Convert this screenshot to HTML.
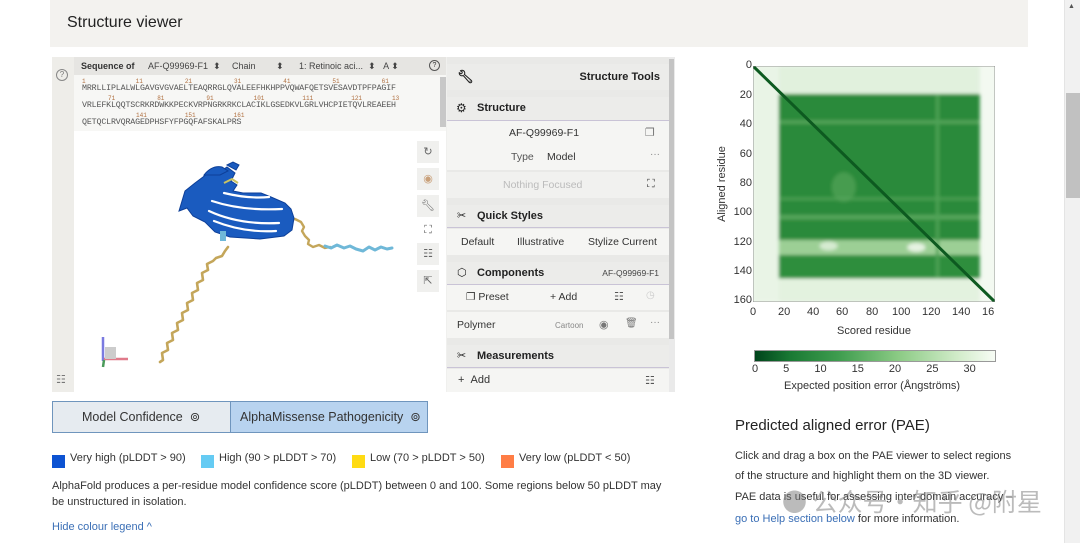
<!DOCTYPE html>
<html><head><meta charset="utf-8">
<style>
*{box-sizing:border-box;margin:0;padding:0}
body{width:1080px;height:543px;overflow:hidden;background:#fff;font-family:"Liberation Sans","DejaVu Sans",sans-serif;color:#333;position:relative}
.a{position:absolute}
.t{position:absolute;white-space:nowrap}
.row{position:absolute;left:447px;width:222px;background:#f5f5f3}
.hd{background:#ececea;font-weight:bold;font-size:11px;color:#222;border-bottom:1px solid #c9c3d6}
.mono{font-family:"Liberation Mono",monospace;font-size:8.3px;color:#555;letter-spacing:-0.15px}
.num{font-family:"Liberation Mono",monospace;font-size:6px;color:#b07040}
.ic{position:absolute;width:22px;height:22px;background:#f0f0ee;color:#666;font-size:11px;text-align:center;line-height:22px}
.yl{position:absolute;left:718px;width:34px;text-align:right;font-size:11px}
</style></head><body>
<div class="a" style="left:50px;top:0;width:978px;height:47px;background:#f3f2ef"></div>
<div class="t" style="left:67px;top:14px;font-size:16px;color:#222">Structure viewer</div>
<div class="a" style="left:1064px;top:0;width:16px;height:543px;background:#f1f1f1;border-left:1px solid #e4e4e4"></div>
<div class="a" style="left:1066px;top:93px;width:14px;height:105px;background:#c1c1c1"></div>
<div class="t" style="left:1068px;top:3px;font-size:7px;color:#555">▲</div>

<div class="a" style="left:52px;top:57px;width:623px;height:335px;background:#f0f0ee"></div>
<div class="a" style="left:52px;top:57px;width:22px;height:335px;background:#eeede9"></div>
<div class="t" style="left:56px;top:69px;width:12px;height:12px;border:1px solid #888;border-radius:50%;font-size:8px;text-align:center;line-height:10px;color:#777">?</div>
<div class="t" style="left:56px;top:373px;font-size:11px;color:#777">☷</div>
<div class="a" style="left:74px;top:57px;width:372px;height:18px;background:#e6e5e2"></div>
<div class="t" style="left:81px;top:61px;font-size:9px;font-weight:bold;color:#333">Sequence of</div>
<div class="t" style="left:148px;top:61px;font-size:9px;color:#444">AF-Q99969-F1 &nbsp;⬍</div>
<div class="t" style="left:232px;top:61px;font-size:9px;color:#444">Chain</div>
<div class="t" style="left:276px;top:61px;font-size:9px;color:#444">⬍</div>
<div class="t" style="left:299px;top:61px;font-size:9px;color:#444">1: Retinoic aci... &nbsp;⬍ &nbsp;&nbsp;A ⬍</div>
<div class="t" style="left:429px;top:60px;width:11px;height:11px;border:1px solid #555;border-radius:50%;font-size:7px;text-align:center;line-height:9px">?</div>
<div class="a" style="left:74px;top:75px;width:372px;height:56px;background:#f7f7f5"></div>
<div class="a" style="left:440px;top:77px;width:6px;height:50px;background:#c8c8c8"></div>
<div class="t num" style="left:82px;top:78px">1<span style="padding-left:50px">11</span><span style="padding-left:42px">21</span><span style="padding-left:42px">31</span><span style="padding-left:42px">41</span><span style="padding-left:42px">51</span><span style="padding-left:42px">61</span></div>
<div class="t mono" style="left:82px;top:84px">MRRLLIPLALWLGAVGVGVAELTEAQRRGLQVALEEFHKHPPVQWAFQETSVESAVDTPFPAGIF</div>
<div class="t num" style="left:108px;top:95px">71<span style="padding-left:42px">81</span><span style="padding-left:42px">91</span><span style="padding-left:40px">101</span><span style="padding-left:38px">111</span><span style="padding-left:38px">121</span><span style="padding-left:30px">13</span></div>
<div class="t mono" style="left:82px;top:101px">VRLEFKLQQTSCRKRDWKKPECKVRPNGRKRKCLACIKLGSEDKVLGRLVHCPIETQVLREAEEH</div>
<div class="t num" style="left:136px;top:112px">141<span style="padding-left:38px">151</span><span style="padding-left:38px">161</span></div>
<div class="t mono" style="left:82px;top:118px">QETQCLRVQRAGEDPHSFYFPGQFAFSKALPRS</div>
<div class="a" style="left:74px;top:131px;width:372px;height:261px;background:#fff"></div>
<div class="ic" style="left:417px;top:141px">↻</div>
<div class="ic" style="left:417px;top:168px;color:#c9a07a">◉</div>
<div class="ic" style="left:417px;top:195px">🔧︎</div>
<div class="ic" style="left:417px;top:219px;background:#fff">⛶</div>
<div class="ic" style="left:417px;top:243px">☷</div>
<div class="ic" style="left:417px;top:270px">⇱</div>
<svg class="a" style="left:74px;top:131px" width="372" height="261">
 <g fill="none" stroke-linecap="round" stroke-linejoin="round">
  <path d="M86 231 l3-2 l-1-7 l6-3 l-1-7 l6-3 l-1-7 l6-3 l-1-7 l6-3 l-1-7 l6-3 l-1-7 l6-3 l-1-7 l6-3 l-1-7 l6-3 l-1-7 l6-3 l-1-6 l6-3 l3-3 l6-2 l3-5 l3-4" stroke="#c4a65a" stroke-width="2.6"/>
  <path d="M205 86 l8 3 l8 -1 l6 3 l3 5 l-2 4 l3 5 l4 4 l-1 4 l5 3 l6-2 l6 3 l5-1" stroke="#c4a65a" stroke-width="2.4"/>
  <path d="M251 115 l6 2 l6-3 l7 3 l6-2 l6 3 l7 2 l6-4 l6 3 l6-3 l6 2 l5-1" stroke="#6fb8d8" stroke-width="3"/>
 </g>
 <g fill="#1a5bbf" stroke="#0d3f98" stroke-width="1">
  <path d="M111 60 l10 -8 l8 -6 l10 -8 l8 2 l6 -4 l8 6 l-4 8 l6 4 l-4 6 l10 2 l18 0 l10 4 l14 6 l6 6 l3 9 l-2 12 l-8 6 l-24 3 l-30 -2 l-15 -5 l-10 -10 l-12 -6 l-6 -8 l-8 3 z"/>
  <path d="M130 44 q8-10 18-8 l6 4 l-8 4 z"/>
  <path d="M153 34 l6 -3 l6 3 l-3 5 z"/>
 </g>
 <g fill="none" stroke="#fff" stroke-width="2.2" stroke-linecap="round">
  <path d="M135 80 q30 14 70 12"/><path d="M140 90 q30 12 62 10"/><path d="M138 70 q30 10 70 8"/><path d="M150 62 q25 6 45 4"/>
 </g>
 <path d="M150 52 l8 -4 l6 4" stroke="#c9c262" stroke-width="2" fill="none"/>
 <rect x="146" y="100" width="6" height="10" fill="#6fb8d8"/>
 <g stroke-width="2.5">
  <line x1="29" y1="206" x2="29" y2="230" stroke="#7a7ae0"/>
  <line x1="30" y1="228" x2="54" y2="228" stroke="#e07a8a"/>
  <line x1="30" y1="229" x2="29" y2="236" stroke="#4a9a5a"/>
 </g>
 <rect x="31" y="216" width="11" height="12" fill="#ccc"/>
</svg>

<div class="a" style="left:447px;top:57px;width:222px;height:335px;background:#e9e9e7"></div>
<div class="a" style="left:669px;top:57px;width:6px;height:335px;background:#eaeaea"></div>
<div class="a" style="left:669px;top:59px;width:5px;height:280px;background:#c4c4c4"></div>
<div class="row hd" style="top:64px;height:26px;border:none"><span class="t" style="left:10px;top:5px;font-size:13px">🔧︎</span><span class="t" style="right:9px;top:7px">Structure Tools</span></div>
<div class="row hd" style="top:97px;height:24px"><span class="t" style="left:9px;top:4px;font-size:12px">⚙</span><span class="t" style="left:30px;top:5px">Structure</span></div>
<div class="row" style="top:121px;height:25px"><span class="t" style="left:62px;top:6px;font-size:10.5px">AF-Q99969-F1</span><span class="t" style="left:198px;top:5px;font-size:11px;color:#777">❐</span></div>
<div class="row" style="top:146px;height:24px"><span class="t" style="left:64px;top:5px;font-size:10.5px;color:#555">Type</span><span class="t" style="left:100px;top:5px;font-size:10.5px">Model</span><span class="t" style="left:203px;top:3px;font-size:10px;color:#888">···</span></div>
<div class="row" style="top:172px;height:26px;background:#f1f1ef"><span class="t" style="left:56px;top:7px;font-size:10.5px;color:#bbb">Nothing Focused</span><span class="t" style="left:200px;top:6px;font-size:11px;color:#444">⛶</span></div>
<div class="row hd" style="top:205px;height:23px"><span class="t" style="left:10px;top:4px;font-size:11px">✂</span><span class="t" style="left:30px;top:5px">Quick Styles</span></div>
<div class="row" style="top:229px;height:26px"><span class="t" style="left:14px;top:7px;font-size:10.5px">Default</span><span class="t" style="left:70px;top:7px;font-size:10.5px">Illustrative</span><span class="t" style="left:141px;top:7px;font-size:10.5px">Stylize Current</span></div>
<div class="row hd" style="top:262px;height:23px"><span class="t" style="left:10px;top:4px;font-size:11px">⬡</span><span class="t" style="left:30px;top:5px">Components</span><span class="t" style="right:10px;top:6px;font-size:8.5px;font-weight:normal;color:#444">AF-Q99969-F1</span></div>
<div class="row" style="top:285px;height:25px"><span class="t" style="left:19px;top:6px;font-size:10.5px">❐ Preset</span><span class="t" style="left:103px;top:6px;font-size:10.5px">+ Add</span><span class="t" style="left:167px;top:5px;font-size:11px;color:#555">☷</span><span class="t" style="left:199px;top:5px;font-size:10px;color:#ccc">◷</span></div>
<div class="row" style="top:312px;height:26px"><span class="t" style="left:10px;top:7px;font-size:10.5px">Polymer</span><span class="t" style="left:108px;top:9px;font-size:8px;color:#888">Cartoon</span><span class="t" style="left:152px;top:6px;font-size:11px;color:#777">◉</span><span class="t" style="left:178px;top:6px;font-size:10px;color:#777">🗑︎</span><span class="t" style="left:203px;top:5px;font-size:10px;color:#888">···</span></div>
<div class="row hd" style="top:345px;height:23px"><span class="t" style="left:10px;top:4px;font-size:11px">✂</span><span class="t" style="left:30px;top:5px">Measurements</span></div>
<div class="row" style="top:369px;height:23px"><span class="t" style="left:11px;top:5px;font-size:11px">+ &nbsp;Add</span><span class="t" style="left:198px;top:5px;font-size:11px;color:#555">☷</span></div>

<div class="a" style="left:52px;top:401px;width:376px;height:32px;border:1px solid #6f95bd;background:#e6ebf0"></div>
<div class="a" style="left:230px;top:401px;width:198px;height:32px;border:1px solid #6f95bd;background:#b8d3ef"></div>
<div class="t" style="left:82px;top:409px;font-size:12.5px;color:#333">Model Confidence &nbsp;⊚</div>
<div class="t" style="left:240px;top:409px;font-size:12.5px;color:#333">AlphaMissense Pathogenicity &nbsp;⊚</div>
<div class="a" style="left:52px;top:455px;width:13px;height:13px;background:#0d53d2"></div>
<div class="t" style="left:70px;top:452px;font-size:11px">Very high (pLDDT &gt; 90)</div>
<div class="a" style="left:201px;top:455px;width:13px;height:13px;background:#65cbf3"></div>
<div class="t" style="left:219px;top:452px;font-size:11px">High (90 &gt; pLDDT &gt; 70)</div>
<div class="a" style="left:352px;top:455px;width:13px;height:13px;background:#ffdb13"></div>
<div class="t" style="left:370px;top:452px;font-size:11px">Low (70 &gt; pLDDT &gt; 50)</div>
<div class="a" style="left:501px;top:455px;width:13px;height:13px;background:#ff7d45"></div>
<div class="t" style="left:519px;top:452px;font-size:11px">Very low (pLDDT &lt; 50)</div>
<div class="t" style="left:52px;top:478px;font-size:11px;line-height:16px;white-space:normal;width:620px">AlphaFold produces a per-residue model confidence score (pLDDT) between 0 and 100. Some regions below 50 pLDDT may be unstructured in isolation.</div>
<div class="t" style="left:52px;top:521px;font-size:11px;color:#3b6fb6">Hide colour legend ^</div>

<svg class="a" style="left:753px;top:66px" width="242" height="236" viewBox="0 0 160 160" preserveAspectRatio="none">
 <defs><filter id="b" x="-10%" y="-10%" width="120%" height="120%"><feGaussianBlur stdDeviation="1.2"/></filter></defs>
 <rect width="160" height="160" fill="#f3f9f1"/>
 <g filter="url(#b)">
  <rect x="17" y="19" width="133" height="99" fill="#2b8a3a"/>
  <rect x="17" y="128" width="133" height="16" fill="#2f8e3c"/>
  <rect x="17" y="118" width="133" height="10" fill="#9ccf95"/>
  <rect x="17" y="37" width="133" height="2" fill="#5aa95f"/>
  <rect x="17" y="101" width="133" height="3" fill="#56a65c"/>
  <rect x="17" y="89" width="133" height="2" fill="#4c9f53"/>
  <rect x="121" y="19" width="2" height="125" fill="#4fa356"/>
  <rect x="0" y="0" width="17" height="160" fill="#e3f1df" opacity="0.6"/>
  <rect x="17" y="0" width="133" height="19" fill="#d5ebd0" opacity="0.6"/>
  <rect x="17" y="144" width="133" height="16" fill="#d8edd3" opacity="0.6"/>
  <ellipse cx="60" cy="82" rx="8" ry="10" fill="#5aa95f" opacity="0.6"/>
  <ellipse cx="108" cy="123" rx="6" ry="3" fill="#e6f3e2"/>
  <ellipse cx="50" cy="122" rx="6" ry="3" fill="#d6ebd1"/>
 </g>
 <line x1="0" y1="0" x2="160" y2="160" stroke="#0d5a20" stroke-width="2"/>
 <rect width="160" height="160" fill="none" stroke="#888" stroke-width="0.6"/>
</svg>
<div class="yl" style="top:59px">0</div>
<div class="yl" style="top:89px">20</div>
<div class="yl" style="top:118px">40</div>
<div class="yl" style="top:148px">60</div>
<div class="yl" style="top:177px">80</div>
<div class="yl" style="top:206px">100</div>
<div class="yl" style="top:236px">120</div>
<div class="yl" style="top:265px">140</div>
<div class="yl" style="top:294px">160</div>
<div class="t" style="left:672px;top:178px;width:100px;text-align:center;font-size:11px;transform:rotate(-90deg)">Aligned residue</div>
<div class="t" style="left:750px;top:306px;font-size:11px">0</div>
<div class="t" style="left:778px;top:306px;font-size:11px">20</div>
<div class="t" style="left:807px;top:306px;font-size:11px">40</div>
<div class="t" style="left:836px;top:306px;font-size:11px">60</div>
<div class="t" style="left:866px;top:306px;font-size:11px">80</div>
<div class="t" style="left:892px;top:306px;font-size:11px">100</div>
<div class="t" style="left:922px;top:306px;font-size:11px">120</div>
<div class="t" style="left:952px;top:306px;font-size:11px">140</div>
<div class="t" style="left:982px;top:306px;font-size:11px">16</div>
<div class="t" style="left:837px;top:325px;font-size:11px">Scored residue</div>
<div class="a" style="left:754px;top:350px;width:242px;height:12px;border:1px solid #999;background:linear-gradient(to right,#00441b,#1a7a34 15%,#3f9d4f 35%,#8ccb85 60%,#d3eccb 85%,#f7fcf5)"></div>
<div class="t" style="left:752px;top:363px;font-size:11px;word-spacing:22px">0 5 10 15 20 25 30</div>
<div class="t" style="left:784px;top:380px;font-size:11px">Expected position error (Ångströms)</div>

<div class="t" style="left:735px;top:417px;font-size:15px;color:#222">Predicted aligned error (PAE)</div>
<div class="t" style="left:735px;top:446px;font-size:11px;line-height:20px;white-space:normal;width:280px">Click and drag a box on the PAE viewer to select regions of the structure and highlight them on the 3D viewer.</div>
<div class="t" style="left:735px;top:491px;font-size:11px">PAE data is useful for assessing inter-domain accuracy –</div>
<div class="t" style="left:735px;top:513px;font-size:11px"><span style="color:#3b6fb6">go to Help section below</span> for more information.</div>
<div class="t" style="left:782px;top:483px;font-size:25px;color:rgba(120,120,120,0.5);font-family:'Noto Sans CJK SC',sans-serif">● 公众号·知乎 @附星</div>
</body></html>
